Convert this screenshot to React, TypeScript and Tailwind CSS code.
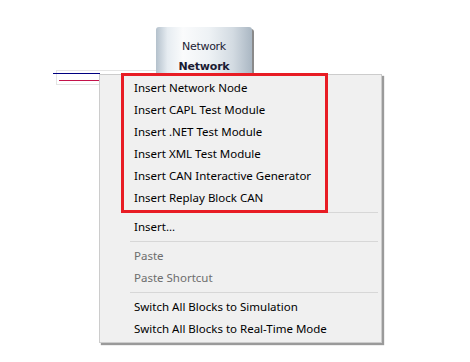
import React from "react";

type Entry = { label: string; disabled?: boolean } | "sep";

const entries: Entry[] = [
  { label: "Insert Network Node" },
  { label: "Insert CAPL Test Module" },
  { label: "Insert .NET Test Module" },
  { label: "Insert XML Test Module" },
  { label: "Insert CAN Interactive Generator" },
  { label: "Insert Replay Block CAN" },
  "sep",
  { label: "Insert..." },
  "sep",
  { label: "Paste", disabled: true },
  { label: "Paste Shortcut", disabled: true },
  "sep",
  { label: "Switch All Blocks to Simulation" },
  { label: "Switch All Blocks to Real-Time Mode" },
];

function NetworkBlock() {
  return (
    <div className="absolute left-[156px] top-[27px] h-[60px] w-[96px]">
      <div className="absolute left-[2px] top-[2px] h-full w-full rounded-t-[3px] bg-[#8a8a8a]" />
      <div className="relative flex h-full w-full flex-col items-center rounded-t-[3px] bg-[linear-gradient(90deg,#b4c1cc_0%,#e6ecf1_12%,#fafbfc_28%,#eef2f5_55%,#d3dbe2_80%,#aab7c3_100%)] pt-[13px] font-['DejaVu_Sans',sans-serif] text-[11px] leading-[14px] text-[#1b1b33]">
        <span className="tracking-[-0.3px]">Network</span>
        <span className="mt-[6px] font-bold tracking-[-0.2px]">Network</span>
      </div>
    </div>
  );
}

function Wires() {
  return (
    <>
      <div className="absolute left-[56px] top-[70px] h-[14px] w-[100px] border-l border-t border-[#e4e4e4]" />
      <div className="absolute left-[56px] top-[84px] h-px w-[44px] bg-[#e4e4e4]" />
      <div className="absolute left-[53px] top-[73px] h-px w-[47px] bg-[#000080]" />
      <div className="absolute left-[59px] top-[80px] h-px w-[41px] bg-[#c4124a]" />
    </>
  );
}

function ContextMenu() {
  return (
    <div className="absolute left-[99px] top-[74px] w-[283px] border border-[#cccccc] bg-[#f0f0f0] py-[2px] shadow-[2px_2px_1px_0_#9a9a9a] font-['Noto_Sans',sans-serif] text-[11.5px]">
      {entries.map((e, i) =>
        e === "sep" ? (
          <div key={i} className="flex h-[7px] items-center pl-[30px] pr-[3px]">
            <div className="h-px w-full bg-[#d7d7d7]" />
          </div>
        ) : (
          <div
            key={i}
            className={
              "flex h-[22px] items-center pl-[34px] " +
              (e.disabled ? "text-[#6d6d6d]" : "text-black")
            }
          >
            {e.label}
          </div>
        )
      )}
    </div>
  );
}

export default function App() {
  return (
    <div className="relative h-[362px] w-[470px] overflow-hidden bg-white">
      <Wires />
      <NetworkBlock />
      <ContextMenu />
      <div className="pointer-events-none absolute left-[121px] top-[73px] h-[140px] w-[207px] border-[3px] border-[#e81c24]" />
    </div>
  );
}
